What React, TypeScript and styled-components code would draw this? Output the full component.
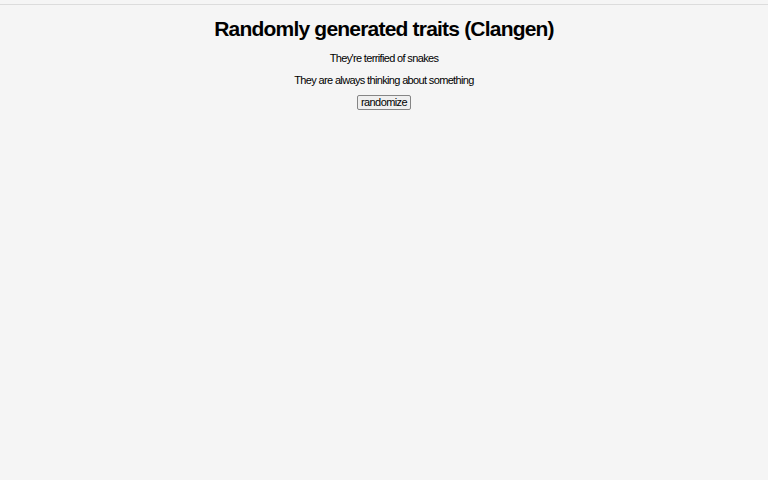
import React, { useState } from "react";
import styled, { createGlobalStyle } from "styled-components";

const Global = createGlobalStyle`
  html, body { margin: 0; padding: 0; background: #f5f5f5; }
  body { font-family: "Liberation Sans", Arial, sans-serif; color: #000; }
`;

const Page = styled.main`
  border-top: 1px solid #dcdcdc;
  margin-top: 4px;
  display: flex;
  flex-direction: column;
  align-items: center;
  padding-top: 12px;
`;

const Title = styled.h1`
  margin: 0 0 11px;
  font-size: 21px;
  font-weight: bold;
  line-height: 24px;
  letter-spacing: -0.8px;
`;

const TraitList = styled.div`
  display: flex;
  flex-direction: column;
  align-items: center;
  gap: 9px;
  margin-bottom: 8px;
`;

const Trait = styled.p`
  margin: 0;
  font-size: 11px;
  line-height: 13px;
  letter-spacing: -0.65px;
`;

const Button = styled.button`
  font-family: "Liberation Sans", Arial, sans-serif;
  font-size: 11px;
  line-height: 11px;
  letter-spacing: -0.6px;
  padding: 1px 3px;
  background: #efefef;
  border: 1px solid #858585;
  border-radius: 2px;
  color: #000;
`;

const traits = [
  "They're terrified of snakes",
  "They are always thinking about something",
];

export default function App() {
  const [items] = useState(traits);
  return (
    <>
      <Global />
      <Page>
        <Title>Randomly generated traits (Clangen)</Title>
        <TraitList>
          {items.map((t) => (
            <Trait key={t}>{t}</Trait>
          ))}
        </TraitList>
        <Button>randomize</Button>
      </Page>
    </>
  );
}
